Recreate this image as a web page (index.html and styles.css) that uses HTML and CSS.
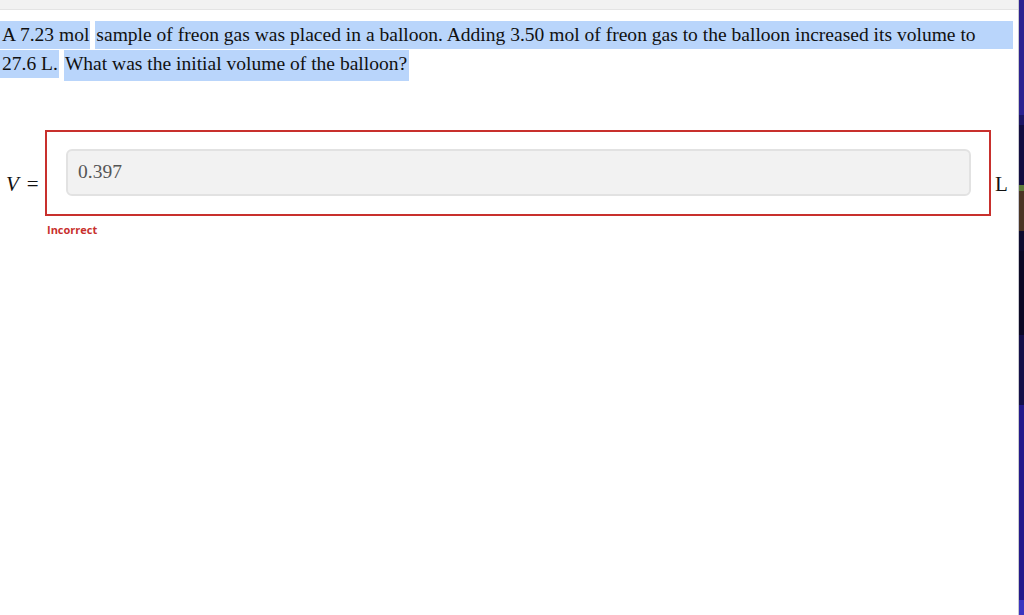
FILE: index.html
```html
<!DOCTYPE html>
<html>
<head>
<meta charset="utf-8">
<link rel="stylesheet" href="styles.css">
</head>
<body>
<div class="page">
  <main class="main">
    <div class="topbar"></div>
    <div class="question">
      <div class="qline">
        <span class="sel sel-a">A 7.23 mol</span><span class="gap"></span><span class="sel sel-fill">sample of freon gas was placed in a balloon. Adding 3.50 mol of freon gas to the balloon increased its volume to</span>
      </div>
      <div class="qline">
        <span class="sel sel-b">27.6 L.</span><span class="gap"></span><span class="sel sel-c">What was the initial volume of the balloon?</span>
      </div>
    </div>
    <div class="answer">
      <div class="label"><span class="var">V</span><span class="eq">=</span></div>
      <div class="field">
        <div class="box">
          <div class="input">0.397</div>
        </div>
        <div class="feedback">Incorrect</div>
      </div>
      <div class="unit">L</div>
    </div>
  </main>
  <aside class="strip">
    <div class="s1"></div>
    <div class="s2"></div>
    <div class="s3"></div>
    <div class="s4"></div>
    <div class="s5"></div>
    <div class="s6"></div>
    <div class="s7"></div>
    <div class="s8"></div>
    <div class="s9"></div>
    <div class="s10"></div>
  </aside>
</div>
</body>
</html>
```

FILE: styles.css
```css
html, body {
  margin: 0;
  padding: 0;
  background: #ffffff;
}
body {
  width: 1024px;
  height: 615px;
  overflow: hidden;
  font-family: "Liberation Serif", "Times New Roman", serif;
  color: #111;
}
.page {
  display: flex;
  height: 615px;
}
.main {
  flex: 1;
  display: flex;
  flex-direction: column;
  border-right: 1px solid #c9c9cf;
}
.topbar {
  height: 9px;
  background: #f2f2f2;
  border-bottom: 1px solid #e4e4e4;
}
.question {
  margin-top: 11px;
  margin-right: 5px;
  font-size: 19.55px;
  line-height: 22px;
}
.qline {
  display: flex;
  align-items: flex-start;
  height: 29px;
}
.sel {
  background: #b9d5fb;
  padding: 3px 0 3px 0;
  white-space: nowrap;
}
.sel-a {
  padding-left: 2px;
  padding-right: 1px;
}
.gap {
  width: 5px;
  flex: none;
}
.sel-fill {
  flex: 1;
  padding-left: 1px;
}
.sel-b {
  padding-left: 2px;
  padding-right: 1px;
}
.sel-c {
  padding-left: 1px;
  padding-right: 2px;
  padding-bottom: 6px;
}
.answer {
  display: flex;
  align-items: flex-start;
  margin-top: 51px;
}
.label {
  width: 45px;
  flex: none;
  margin-top: 43px;
  padding-left: 6px;
  box-sizing: border-box;
  display: flex;
  font-size: 21px;
  line-height: 22px;
}
.var {
  font-style: italic;
}
.eq {
  margin-left: 8px;
}
.field {
  width: 946px;
  flex: none;
  display: flex;
  flex-direction: column;
}
.box {
  border: 2px solid #c8302d;
  padding: 17px 18px 18px 19px;
}
.input {
  height: 43px;
  background: #f2f2f2;
  border: 2px solid #e2e2e2;
  border-radius: 6px;
  padding-left: 10px;
  font-size: 19.5px;
  line-height: 42px;
  color: #555;
}
.feedback {
  margin-top: 6px;
  padding-left: 2px;
  font-family: "Open Sans", "Liberation Sans", sans-serif;
  font-weight: 700;
  font-size: 11px;
  color: #c8302d;
}
.unit {
  margin-top: 43px;
  padding-left: 4px;
  font-size: 21px;
  line-height: 22px;
}
.strip {
  width: 5px;
  flex: none;
  display: flex;
  flex-direction: column;
}
.s1 { height: 115px; background: #2b2190; }
.s2 { height: 10px; background: #1c1665; }
.s3 { height: 60px; background: #110d40; }
.s4 { height: 6px; background: #5c7a3a; }
.s5 { height: 40px; background: #4a3424; }
.s6 { height: 20px; background: #0d0b2e; }
.s7 { height: 84px; background: #0a0824; }
.s8 { height: 70px; background: #130f48; }
.s9 { height: 195px; background: #22198a; }
.s10 { flex: 1; background: #3a35c0; }
```
